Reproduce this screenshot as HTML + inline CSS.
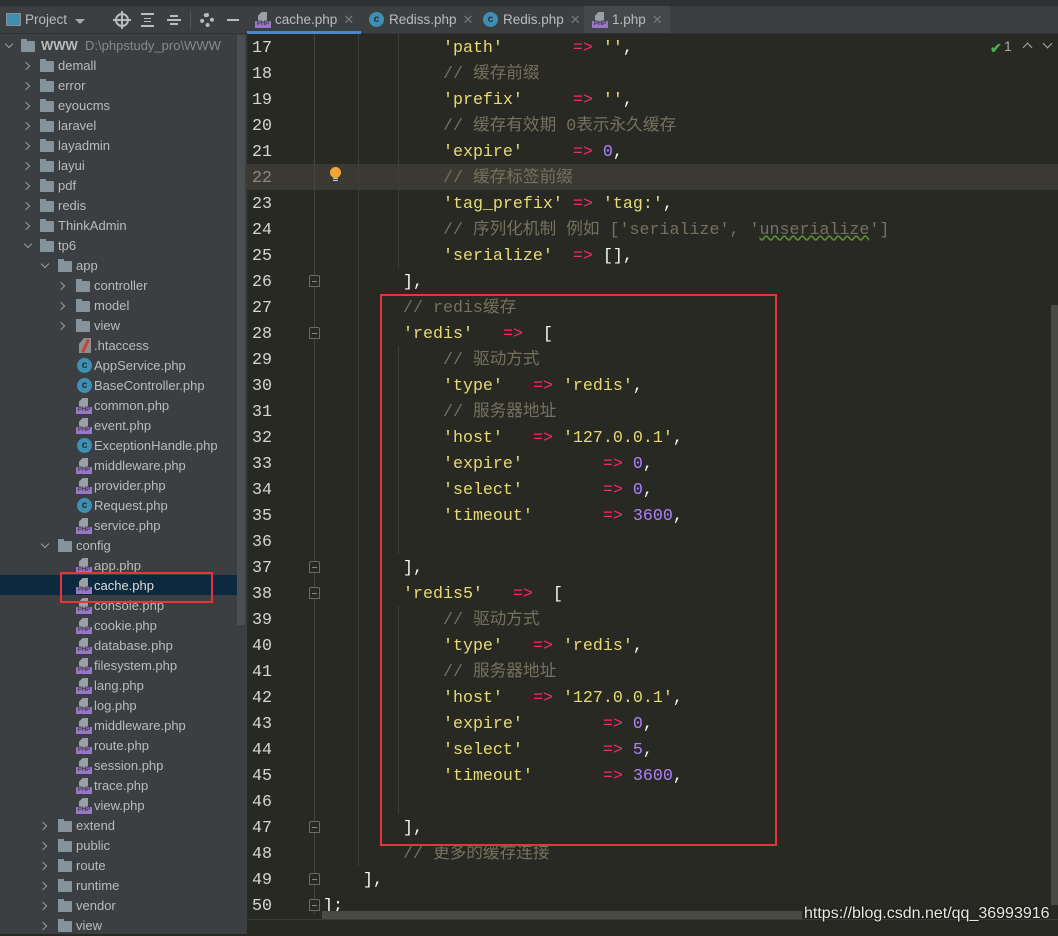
<!DOCTYPE html>
<html><head><meta charset="utf-8"><style>
*{margin:0;padding:0;box-sizing:border-box}
body{width:1058px;height:934px;overflow:hidden;background:#282923;position:relative;font-family:"Liberation Sans","Noto Sans CJK SC",sans-serif}
.abs{position:absolute}
#top{left:0;top:0;width:1058px;height:6px;background:#2f3133}
#side{left:0;top:6px;width:247px;height:928px;background:#3c3f41}
#sidehead{left:0;top:6px;width:247px;height:28px;background:#3c3f41;border-bottom:1px solid #323232}
#tabs{left:247px;top:6px;width:811px;height:28px;background:#3c3f41;border-bottom:1px solid #323232}
.tab{position:absolute;top:0;height:27px;color:#bbb;font-size:13.5px;line-height:27px}
.tab .x{color:#777;font-size:13px;margin-left:6px}
.row{position:absolute;height:20px;line-height:20px;font-size:13px;color:#bbbbbb;white-space:nowrap}
.arr{position:absolute;width:6px;height:6px;border-right:1.5px solid #9a9a9a;border-bottom:1.5px solid #9a9a9a}
.arr.c{transform:rotate(-45deg)}
.arr.o{transform:rotate(45deg)}
.fold{position:absolute;width:14px;height:11px;background:#87939a;border-radius:1px}
.fold:before{content:"";position:absolute;left:0;top:-2px;width:6px;height:3px;background:#87939a}
.php{position:absolute;width:16px;height:16px}
.php .d{position:absolute;left:3px;top:0;width:9px;height:9px;background:#9aa0a6;clip-path:polygon(40% 0,100% 0,100% 100%,0 100%,0 40%)}
.php .p{position:absolute;left:0;top:9px;width:16px;height:7px;background:#9876c9;color:#3c3f41;font-size:6px;line-height:7px;font-weight:bold;text-align:center;font-family:"Liberation Sans",sans-serif}
.ci{position:absolute;width:15px;height:15px;border-radius:50%;background:#3d8fb4;color:#2b2b2b;font-size:10px;line-height:15px;text-align:center;font-weight:bold}
.ln{position:absolute;left:252px;width:30px;height:26px;line-height:26px;color:#d6d6d6;font-family:"Liberation Mono",monospace;font-size:16.67px;margin-top:2px}
.cl{position:absolute;left:323px;height:26px;line-height:26px;white-space:pre;color:#f8f8f2;font-family:"Liberation Mono","Noto Sans CJK SC",monospace;font-size:16.67px;margin-top:2px}
.s{color:#e6db74}.o{color:#f92672}.n{color:#ae81ff}.cm{color:#75715e}
.g{position:absolute;width:1px;background:#3d3e38}
.fm{position:absolute;left:309px;width:11px;height:12px;border:1px solid #6b6b66;background:#282923;border-radius:2px 2px 0 0}
.fm:after{content:"";position:absolute;left:2px;top:5px;width:5px;height:1px;background:#888}
.tree{position:absolute;left:0;top:1px;width:247px;height:934px}
</style></head><body>
<div id="top" class="abs"></div>
<div id="side" class="abs"></div>
<div id="sidehead" class="abs">
  <div class="abs" style="left:6px;top:7px;width:15px;height:13px;border:1.5px solid #8a9298;background:#3d8fb4"></div>
  <div class="abs" style="left:25px;top:0;line-height:28px;font-size:13.5px;color:#bbb">Project</div>
  <div class="abs" style="left:75px;top:13px;width:0;height:0;border-left:5px solid transparent;border-right:5px solid transparent;border-top:5px solid #aaa"></div>
  <div class="abs" style="left:115px;top:7px;width:14px;height:14px;border:2px solid #bbb;border-radius:50%"></div>
  <div class="abs" style="left:121px;top:5px;width:2px;height:18px;background:#bbb"></div>
  <div class="abs" style="left:113px;top:13px;width:18px;height:2px;background:#bbb"></div>
  <div class="abs" style="left:141px;top:7px;width:13px;height:14px;border-top:2px solid #bbb;border-bottom:2px solid #bbb"></div>
  <div class="abs" style="left:144px;top:12px;width:7px;height:4px;border-top:1.5px solid #bbb;border-bottom:1.5px solid #bbb"></div>
  <div class="abs" style="left:167px;top:13px;width:14px;height:2px;background:#bbb"></div>
  <div class="abs" style="left:170px;top:7px;width:8px;height:4px;border-bottom:2px solid #bbb"></div>
  <div class="abs" style="left:170px;top:17px;width:8px;height:4px;border-top:2px solid #bbb"></div>
  <div class="abs" style="left:190px;top:5px;width:1px;height:18px;background:#555"></div>
  <div class="abs" style="left:200px;top:7px;width:14px;height:14px;border:4px dotted #bbb;border-radius:50%"></div>
  <div class="abs" style="left:227px;top:13px;width:12px;height:2px;background:#bbb"></div>
</div>
<div id="tabs" class="abs">
  <div class="tab" style="left:0;width:114px;padding-left:8px"><span class="php" style="left:8px;top:6px"><span class="d"></span><span class="p">PHP</span></span><span style="margin-left:20px">cache.php</span><span class="x">✕</span></div>
  <div class="abs" style="left:0;top:25px;width:114px;height:3px;background:#4a88c7"></div>
  <div class="tab" style="left:114px;width:114px;padding-left:8px"><span class="ci" style="left:8px;top:6px">c</span><span style="margin-left:20px">Rediss.php</span><span class="x">✕</span></div>
  <div class="tab" style="left:228px;width:109px;padding-left:8px"><span class="ci" style="left:8px;top:6px">c</span><span style="margin-left:20px">Redis.php</span><span class="x">✕</span></div>
  <div class="tab" style="left:337px;width:86px;padding-left:8px;background:#45484a"><span class="php" style="left:8px;top:6px"><span class="d"></span><span class="p">PHP</span></span><span style="margin-left:20px">1.php</span><span class="x">✕</span></div>
</div>
<div class="abs" style="left:237px;top:35px;width:8px;height:590px;background:#4c4f51"></div>
<div class="abs" style="left:0;top:575px;width:237px;height:20px;background:#0d293e"></div>

<div class="tree">
<div class="arr o abs" style="left:6px;top:40px"></div><div class="fold" style="left:21px;top:40px"></div><div class="row" style="left:41px;top:35px"><b style="color:#bbb">WWW</b> <span style="color:#888">&nbsp;D:\phpstudy_pro\WWW</span></div>

<div class="arr c abs" style="left:23px;top:62px"></div><div class="fold" style="left:40px;top:60px"></div><div class="row" style="left:58px;top:55px">demall</div>
<div class="arr c abs" style="left:23px;top:82px"></div><div class="fold" style="left:40px;top:80px"></div><div class="row" style="left:58px;top:75px">error</div>
<div class="arr c abs" style="left:23px;top:102px"></div><div class="fold" style="left:40px;top:100px"></div><div class="row" style="left:58px;top:95px">eyoucms</div>
<div class="arr c abs" style="left:23px;top:122px"></div><div class="fold" style="left:40px;top:120px"></div><div class="row" style="left:58px;top:115px">laravel</div>
<div class="arr c abs" style="left:23px;top:142px"></div><div class="fold" style="left:40px;top:140px"></div><div class="row" style="left:58px;top:135px">layadmin</div>
<div class="arr c abs" style="left:23px;top:162px"></div><div class="fold" style="left:40px;top:160px"></div><div class="row" style="left:58px;top:155px">layui</div>
<div class="arr c abs" style="left:23px;top:182px"></div><div class="fold" style="left:40px;top:180px"></div><div class="row" style="left:58px;top:175px">pdf</div>
<div class="arr c abs" style="left:23px;top:202px"></div><div class="fold" style="left:40px;top:200px"></div><div class="row" style="left:58px;top:195px">redis</div>
<div class="arr c abs" style="left:23px;top:222px"></div><div class="fold" style="left:40px;top:220px"></div><div class="row" style="left:58px;top:215px">ThinkAdmin</div>
<div class="arr o abs" style="left:25px;top:240px"></div><div class="fold" style="left:40px;top:240px"></div><div class="row" style="left:58px;top:235px">tp6</div>
<div class="arr o abs" style="left:42px;top:260px"></div><div class="fold" style="left:58px;top:260px"></div><div class="row" style="left:76px;top:255px">app</div>
<div class="arr c abs" style="left:58px;top:282px"></div><div class="fold" style="left:76px;top:280px"></div><div class="row" style="left:94px;top:275px">controller</div>
<div class="arr c abs" style="left:58px;top:302px"></div><div class="fold" style="left:76px;top:300px"></div><div class="row" style="left:94px;top:295px">model</div>
<div class="arr c abs" style="left:58px;top:322px"></div><div class="fold" style="left:76px;top:320px"></div><div class="row" style="left:94px;top:315px">view</div>
<div class="abs" style="left:79px;top:337px;width:12px;height:15px;background:#8a8f94;clip-path:polygon(40% 0,100% 0,100% 100%,0 100%,0 40%)"></div><div class="abs" style="left:84px;top:338px;width:3px;height:14px;background:#d04030;transform:rotate(25deg)"></div><div class="row" style="left:94px;top:335px">.htaccess</div>
<div class="ci" style="left:77px;top:357px">c</div><div class="row" style="left:94px;top:355px">AppService.php</div>
<div class="ci" style="left:77px;top:377px">c</div><div class="row" style="left:94px;top:375px">BaseController.php</div>
<div class="php" style="left:76px;top:397px"><span class="d"></span><span class="p">PHP</span></div><div class="row" style="left:94px;top:395px">common.php</div>
<div class="php" style="left:76px;top:417px"><span class="d"></span><span class="p">PHP</span></div><div class="row" style="left:94px;top:415px">event.php</div>
<div class="ci" style="left:77px;top:437px">c</div><div class="row" style="left:94px;top:435px">ExceptionHandle.php</div>
<div class="php" style="left:76px;top:457px"><span class="d"></span><span class="p">PHP</span></div><div class="row" style="left:94px;top:455px">middleware.php</div>
<div class="php" style="left:76px;top:477px"><span class="d"></span><span class="p">PHP</span></div><div class="row" style="left:94px;top:475px">provider.php</div>
<div class="ci" style="left:77px;top:497px">c</div><div class="row" style="left:94px;top:495px">Request.php</div>
<div class="php" style="left:76px;top:517px"><span class="d"></span><span class="p">PHP</span></div><div class="row" style="left:94px;top:515px">service.php</div>
<div class="arr o abs" style="left:42px;top:540px"></div><div class="fold" style="left:58px;top:540px"></div><div class="row" style="left:76px;top:535px">config</div>
<div class="php" style="left:76px;top:557px"><span class="d"></span><span class="p">PHP</span></div><div class="row" style="left:94px;top:555px">app.php</div>
<div class="php" style="left:76px;top:577px"><span class="d"></span><span class="p">PHP</span></div><div class="row" style="left:94px;top:575px;color:#ddd">cache.php</div>
<div class="php" style="left:76px;top:597px"><span class="d"></span><span class="p">PHP</span></div><div class="row" style="left:94px;top:595px">console.php</div>
<div class="php" style="left:76px;top:617px"><span class="d"></span><span class="p">PHP</span></div><div class="row" style="left:94px;top:615px">cookie.php</div>
<div class="php" style="left:76px;top:637px"><span class="d"></span><span class="p">PHP</span></div><div class="row" style="left:94px;top:635px">database.php</div>
<div class="php" style="left:76px;top:657px"><span class="d"></span><span class="p">PHP</span></div><div class="row" style="left:94px;top:655px">filesystem.php</div>
<div class="php" style="left:76px;top:677px"><span class="d"></span><span class="p">PHP</span></div><div class="row" style="left:94px;top:675px">lang.php</div>
<div class="php" style="left:76px;top:697px"><span class="d"></span><span class="p">PHP</span></div><div class="row" style="left:94px;top:695px">log.php</div>
<div class="php" style="left:76px;top:717px"><span class="d"></span><span class="p">PHP</span></div><div class="row" style="left:94px;top:715px">middleware.php</div>
<div class="php" style="left:76px;top:737px"><span class="d"></span><span class="p">PHP</span></div><div class="row" style="left:94px;top:735px">route.php</div>
<div class="php" style="left:76px;top:757px"><span class="d"></span><span class="p">PHP</span></div><div class="row" style="left:94px;top:755px">session.php</div>
<div class="php" style="left:76px;top:777px"><span class="d"></span><span class="p">PHP</span></div><div class="row" style="left:94px;top:775px">trace.php</div>
<div class="php" style="left:76px;top:797px"><span class="d"></span><span class="p">PHP</span></div><div class="row" style="left:94px;top:795px">view.php</div>
<div class="arr c abs" style="left:40px;top:822px"></div><div class="fold" style="left:58px;top:820px"></div><div class="row" style="left:76px;top:815px">extend</div>
<div class="arr c abs" style="left:40px;top:842px"></div><div class="fold" style="left:58px;top:840px"></div><div class="row" style="left:76px;top:835px">public</div>
<div class="arr c abs" style="left:40px;top:862px"></div><div class="fold" style="left:58px;top:860px"></div><div class="row" style="left:76px;top:855px">route</div>
<div class="arr c abs" style="left:40px;top:882px"></div><div class="fold" style="left:58px;top:880px"></div><div class="row" style="left:76px;top:875px">runtime</div>
<div class="arr c abs" style="left:40px;top:902px"></div><div class="fold" style="left:58px;top:900px"></div><div class="row" style="left:76px;top:895px">vendor</div>
<div class="arr c abs" style="left:40px;top:922px"></div><div class="fold" style="left:58px;top:920px"></div><div class="row" style="left:76px;top:915px">view</div>
</div>
<div class="abs" style="left:60px;top:572px;width:153px;height:31px;border:2px solid #e8333a"></div>

<!-- editor -->
<div class="abs" style="left:247px;top:164px;width:811px;height:26px;background:#3b3a32"></div>
<div class="g" style="left:314px;top:34px;height:880px;background:#45453f"></div>
<div class="g" style="left:358px;top:34px;height:832px"></div>
<div class="g" style="left:398px;top:34px;height:234px"></div>
<div class="g" style="left:398px;top:346px;height:208px"></div>
<div class="g" style="left:398px;top:606px;height:208px"></div>
<div class="abs" style="left:330px;top:167px;width:11px;height:11px;border-radius:50%;background:#f0a732"></div>
<div class="abs" style="left:333px;top:178px;width:5px;height:3px;border-top:1px solid #ccc;border-bottom:1px solid #ccc"></div>
<div class="fm" style="top:275px"></div><div class="fm" style="top:327px"></div><div class="fm" style="top:561px"></div><div class="fm" style="top:587px"></div><div class="fm" style="top:821px"></div><div class="fm" style="top:873px"></div><div class="fm" style="top:899px"></div>

<div class="ln" style="top:34px">17</div><div class="ln" style="top:60px">18</div><div class="ln" style="top:86px">19</div><div class="ln" style="top:112px">20</div><div class="ln" style="top:138px">21</div><div class="ln" style="top:164px;color:#8a8a84">22</div><div class="ln" style="top:190px">23</div><div class="ln" style="top:216px">24</div><div class="ln" style="top:242px">25</div><div class="ln" style="top:268px">26</div><div class="ln" style="top:294px">27</div><div class="ln" style="top:320px">28</div><div class="ln" style="top:346px">29</div><div class="ln" style="top:372px">30</div><div class="ln" style="top:398px">31</div><div class="ln" style="top:424px">32</div><div class="ln" style="top:450px">33</div><div class="ln" style="top:476px">34</div><div class="ln" style="top:502px">35</div><div class="ln" style="top:528px">36</div><div class="ln" style="top:554px">37</div><div class="ln" style="top:580px">38</div><div class="ln" style="top:606px">39</div><div class="ln" style="top:632px">40</div><div class="ln" style="top:658px">41</div><div class="ln" style="top:684px">42</div><div class="ln" style="top:710px">43</div><div class="ln" style="top:736px">44</div><div class="ln" style="top:762px">45</div><div class="ln" style="top:788px">46</div><div class="ln" style="top:814px">47</div><div class="ln" style="top:840px">48</div><div class="ln" style="top:866px">49</div><div class="ln" style="top:892px">50</div>

<div class="cl" style="top:34px">            <span class="s">'path'</span>       <span class="o">=></span> <span class="s">''</span>,</div>
<div class="cl" style="top:60px">            <span class="cm">// 缓存前缀</span></div>
<div class="cl" style="top:86px">            <span class="s">'prefix'</span>     <span class="o">=></span> <span class="s">''</span>,</div>
<div class="cl" style="top:112px">            <span class="cm">// 缓存有效期 0表示永久缓存</span></div>
<div class="cl" style="top:138px">            <span class="s">'expire'</span>     <span class="o">=></span> <span class="n">0</span>,</div>
<div class="cl" style="top:164px">            <span class="cm">// 缓存标签前缀</span></div>
<div class="cl" style="top:190px">            <span class="s">'tag_prefix'</span> <span class="o">=></span> <span class="s">'tag:'</span>,</div>
<div class="cl" style="top:216px">            <span class="cm">// 序列化机制 例如 ['serialize', '<span style="text-decoration:underline wavy #5a8a3a">unserialize</span>']</span></div>
<div class="cl" style="top:242px">            <span class="s">'serialize'</span>  <span class="o">=></span> [],</div>
<div class="cl" style="top:268px">        ],</div>
<div class="cl" style="top:294px">        <span class="cm">// redis缓存</span></div>
<div class="cl" style="top:320px">        <span class="s">'redis'</span>   <span class="o">=></span>  [</div>
<div class="cl" style="top:346px">            <span class="cm">// 驱动方式</span></div>
<div class="cl" style="top:372px">            <span class="s">'type'</span>   <span class="o">=></span> <span class="s">'redis'</span>,</div>
<div class="cl" style="top:398px">            <span class="cm">// 服务器地址</span></div>
<div class="cl" style="top:424px">            <span class="s">'host'</span>   <span class="o">=></span> <span class="s">'127.0.0.1'</span>,</div>
<div class="cl" style="top:450px">            <span class="s">'expire'</span>        <span class="o">=></span> <span class="n">0</span>,</div>
<div class="cl" style="top:476px">            <span class="s">'select'</span>        <span class="o">=></span> <span class="n">0</span>,</div>
<div class="cl" style="top:502px">            <span class="s">'timeout'</span>       <span class="o">=></span> <span class="n">3600</span>,</div>
<div class="cl" style="top:554px">        ],</div>
<div class="cl" style="top:580px">        <span class="s">'redis5'</span>   <span class="o">=></span>  [</div>
<div class="cl" style="top:606px">            <span class="cm">// 驱动方式</span></div>
<div class="cl" style="top:632px">            <span class="s">'type'</span>   <span class="o">=></span> <span class="s">'redis'</span>,</div>
<div class="cl" style="top:658px">            <span class="cm">// 服务器地址</span></div>
<div class="cl" style="top:684px">            <span class="s">'host'</span>   <span class="o">=></span> <span class="s">'127.0.0.1'</span>,</div>
<div class="cl" style="top:710px">            <span class="s">'expire'</span>        <span class="o">=></span> <span class="n">0</span>,</div>
<div class="cl" style="top:736px">            <span class="s">'select'</span>        <span class="o">=></span> <span class="n">5</span>,</div>
<div class="cl" style="top:762px">            <span class="s">'timeout'</span>       <span class="o">=></span> <span class="n">3600</span>,</div>
<div class="cl" style="top:814px">        ],</div>
<div class="cl" style="top:840px">        <span class="cm">// 更多的缓存连接</span></div>
<div class="cl" style="top:866px">    ],</div>
<div class="cl" style="top:892px">];</div>

<div class="abs" style="left:380px;top:294px;width:397px;height:552px;border:2px solid #e8333a"></div>

<div class="abs" style="left:990px;top:40px;color:#4caf50;font-size:14px;font-weight:bold">✔</div>
<div class="abs" style="left:1004px;top:38px;color:#aaa;font-size:14px">1</div>
<div class="abs" style="left:1024px;top:44px;width:7px;height:7px;border-left:1.5px solid #aaa;border-top:1.5px solid #aaa;transform:rotate(45deg)"></div>
<div class="abs" style="left:1044px;top:40px;width:7px;height:7px;border-right:1.5px solid #aaa;border-bottom:1.5px solid #aaa;transform:rotate(45deg)"></div>

<div class="abs" style="left:1051px;top:305px;width:7px;height:600px;background:#4a4a45"></div>
<div class="abs" style="left:322px;top:911px;width:480px;height:8px;background:#4a4a45"></div>
<div class="abs" style="left:247px;top:919px;width:811px;height:1px;background:#3c3c38"></div>
<div class="abs" style="left:804px;top:905px;color:#e8e8e8;font-size:16px;font-family:'Liberation Sans',sans-serif;text-shadow:0 0 2px #000">https://blog.csdn.net/qq_36993916</div>
</body></html>
